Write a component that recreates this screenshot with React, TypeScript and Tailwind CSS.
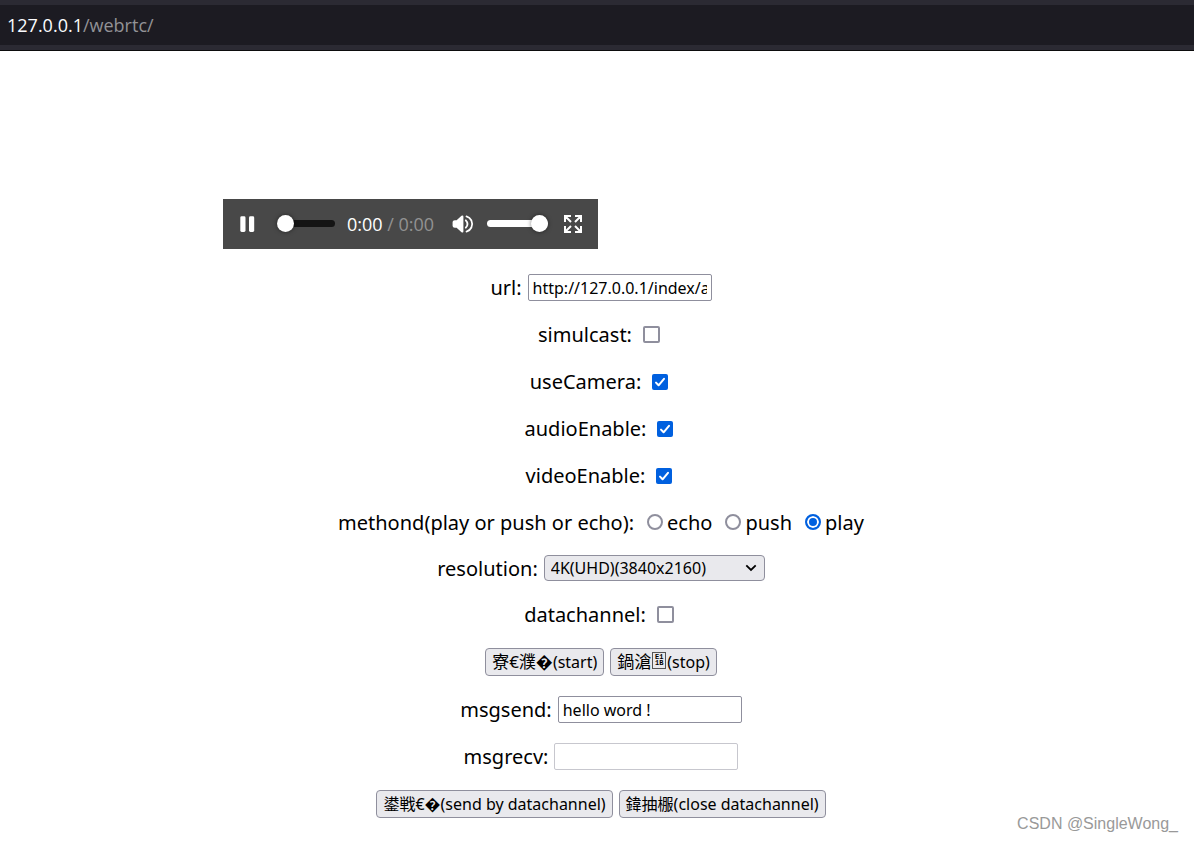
import { useState } from "react";
import type { ReactNode } from "react";

const controlText = "font-['Noto_Sans','Noto_Sans_CJK_SC',sans-serif] text-base leading-5 text-black";
const buttonStyle = `flex h-7 items-center rounded border border-[#8f8f9d] bg-[#e9e9ed] px-1.5 ${controlText}`;
const inputStyle = `h-[27px] w-[184px] rounded-xs border bg-white px-1 ${controlText}`;

function Row({ children, height = "h-[27px]" }: { children: ReactNode; height?: string }) {
  return <div className={`flex items-center justify-center gap-1.5 ${height}`}>{children}</div>;
}

function CheckRow({ id, label, checked = false }: { id: string; label: string; checked?: boolean }) {
  return (
    <Row>
      <label htmlFor={id}>{label}</label>
      <span className="mr-1 ml-[5px] grid place-items-center">
        <input
          id={id}
          type="checkbox"
          defaultChecked={checked}
          className="peer col-start-1 row-start-1 size-[17px] appearance-none rounded-xs border-2 border-[#8f8f9d] bg-white checked:size-4 checked:border-0 checked:bg-[#0060df]"
        />
        <svg viewBox="0 0 16 16" className="pointer-events-none invisible col-start-1 row-start-1 size-4 peer-checked:visible" fill="none" stroke="white" strokeWidth="2" strokeLinecap="round" strokeLinejoin="round">
          <path d="M4 8.6 6.6 11.3 12 4.8" />
        </svg>
      </span>
    </Row>
  );
}

function VideoControls() {
  return (
    <div className="flex h-[50px] w-[375px] items-center bg-[#484848] pb-px text-white">
      <button type="button" aria-label="Pause" className="ml-4 flex">
        <svg viewBox="0 0 18 18" className="size-[18px]" fill="white">
          <rect x="1.3" y="1.3" width="5.2" height="15.6" rx="1.4" />
          <rect x="10" y="1.3" width="5.2" height="15.6" rx="1.4" />
        </svg>
      </button>
      <input
        type="range"
        aria-label="Position"
        min="0"
        max="100"
        defaultValue="0"
        className="ml-5 h-[7px] w-[58px] appearance-none rounded-full bg-[#141414] [&::-webkit-slider-thumb]:size-[17px] [&::-webkit-slider-thumb]:appearance-none [&::-webkit-slider-thumb]:rounded-full [&::-webkit-slider-thumb]:bg-white [&::-webkit-slider-thumb]:shadow-[0_0_4px_#00000080]"
      />
      <div className="ml-3 w-[86px] text-lg leading-6 whitespace-nowrap font-[Open_Sans,sans-serif]">
        0:00 <span className="text-[#929292]">/ 0:00</span>
      </div>
      <button type="button" aria-label="Mute" className="ml-[19px] flex">
        <svg viewBox="0 0 22 20" className="h-5 w-[22px]" fill="none" stroke="white" strokeWidth="1.8" strokeLinecap="round">
          <path d="M2.8 6.3h1.800L9.500 1.800Q11.400.7 11.400 2.700v14.600q0 2-1.900.9l-4.900-4.500H2.800Q.6 13.700.6 11.900V8.100q0-1.800 2.200-1.800Z" fill="white" stroke="none" />
          <path d="M13.800 6.300q3.400 3.700 0 7.400M14.500 2.400q3.300.9 4.900 4.100 1.600 3.500 0 7-1.600 3.200-4.900 4.100" />
        </svg>
      </button>
      <input
        type="range"
        aria-label="Volume"
        min="0"
        max="100"
        defaultValue="100"
        className="ml-[13px] h-[7px] w-[61px] appearance-none rounded-full bg-white [&::-webkit-slider-thumb]:size-[17px] [&::-webkit-slider-thumb]:appearance-none [&::-webkit-slider-thumb]:rounded-full [&::-webkit-slider-thumb]:bg-white [&::-webkit-slider-thumb]:shadow-[0_0_4px_#00000080]"
      />
      <button type="button" aria-label="Full screen" className="ml-4 flex">
        <svg viewBox="0 0 18 18" className="size-[18px]" fill="none" stroke="white" strokeWidth="2">
          <path d="M1 7V1H7M1.500 1.500 7 7M11 1h6V7M16.500 1.500 11 7M1 11v6H7M1.500 16.500 7 11M11 17h6V11M16.500 16.500 11 11" />
        </svg>
      </button>
    </div>
  );
}

function UnknownGlyph() {
  return (
    <span className="mx-px mb-1 grid h-[17px] w-[14px] place-content-center border border-[#555] text-center font-['Liberation_Mono',monospace] text-[7px] leading-[6px] font-bold">
      <span>E1</span>
      <span>1B</span>
    </span>
  );
}

export default function App() {
  const [method, setMethod] = useState("play");
  return (
    <div className="relative flex min-h-screen flex-col bg-white font-['Noto_Sans','Noto_Sans_CJK_SC',sans-serif] text-xl leading-[27px] text-black">
      <header className="flex h-[51px] items-center border-t-[5px] border-b border-t-[#2b2a33] border-b-[#0c0c0d] bg-[#1c1b22] font-['Open_Sans',sans-serif] text-lg shadow-[inset_0_-5px_#2b2a33]">
        <a href="#" className="pb-1.5 pl-[7px] text-[#929296]">
          <span className="text-[#fbfbfe]">127.0.0.1</span>/webrtc/
        </a>
      </header>
      <main className="flex flex-col pl-2">
        <div className="flex h-[198px] items-end justify-center gap-1.5">
          <VideoControls />
          <div className="w-[375px]" />
        </div>
        <form className="mt-[25px] flex flex-col gap-5" onSubmit={(e) => e.preventDefault()}>
          <Row>
            <label htmlFor="url">url:</label>
            <input id="url" type="text" defaultValue="http://127.0.0.1/index/api/webrtc" className={`${inputStyle} border-[#8f8f9d]`} />
          </Row>
          <CheckRow id="simulcast" label="simulcast:" />
          <CheckRow id="camera" label="useCamera:" checked />
          <CheckRow id="audio" label="audioEnable:" checked />
          <CheckRow id="video" label="videoEnable:" checked />
          <Row height="h-[26px]">
            <span>methond(play or push or echo):</span>
            {["echo", "push", "play"].map((name) => (
              <label key={name} className="ml-[7px] flex items-center gap-1">
                <input
                  type="radio"
                  name="method"
                  checked={method === name}
                  onChange={() => setMethod(name)}
                  className="size-4 appearance-none rounded-full border-2 border-[#8f8f9d] bg-white checked:border-[#0060df] checked:bg-[#0060df] checked:shadow-[inset_0_0_0_2px_white]"
                />
                {name}
              </label>
            ))}
          </Row>
          <Row height="h-[26px]">
            <label htmlFor="resolution">resolution:</label>
            <span className="grid items-center">
              <select id="resolution" className={`col-start-1 row-start-1 h-[26px] w-[221px] appearance-none rounded border border-[#8f8f9d] bg-[#e9e9ed] px-1.5 ${controlText}`}>
                <option>4K(UHD)(3840x2160)</option>
              </select>
              <svg viewBox="0 0 12 8" className="pointer-events-none col-start-1 row-start-1 mr-2 h-2 w-3 justify-self-end" fill="none" stroke="black" strokeWidth="1.8">
                <path d="M1.3 1.3 6 6l4.700-4.700" />
              </svg>
            </span>
          </Row>
          <CheckRow id="datachannel" label="datachannel:" />
          <Row height="h-7">
            <button type="button" className={buttonStyle}>
              <span className="text-[17px]">寮€濮�</span>(start)
            </button>
            <button type="button" className={buttonStyle}>
              <span className="text-[17px]">鍋滄</span>
              <UnknownGlyph />
              (stop)
            </button>
          </Row>
          <Row>
            <label htmlFor="msgsend">msgsend:</label>
            <input id="msgsend" type="text" defaultValue="hello word !" className={`${inputStyle} border-[#8f8f9d]`} />
          </Row>
          <Row>
            <label htmlFor="msgrecv">msgrecv:</label>
            <input id="msgrecv" type="text" disabled className={`${inputStyle} border-[#c7c7ce]`} />
          </Row>
          <Row height="h-7">
            <button type="button" className={buttonStyle}>鍙戦€�(send by datachannel)</button>
            <button type="button" className={buttonStyle}>鍏抽棴(close datachannel)</button>
          </Row>
        </form>
      </main>
      <div className="absolute right-4 bottom-2 font-['Liberation_Sans',sans-serif] text-base leading-5 text-[#999]">
        CSDN @SingleWong_
      </div>
    </div>
  );
}
